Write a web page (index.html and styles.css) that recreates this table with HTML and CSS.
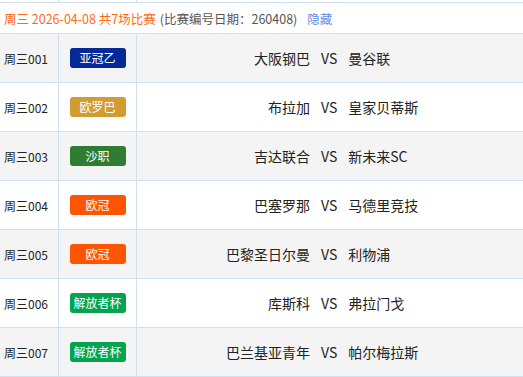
FILE: index.html
```html
<!DOCTYPE html>
<html lang="zh-CN">
<head>
<meta charset="utf-8">
<link rel="stylesheet" href="styles.css">
</head>
<body>
<div class="board">
  <div class="row stub">
    <div class="c-no"></div>
    <div class="c-lg"></div>
    <div class="c-match"></div>
  </div>
  <div class="head">
    <span class="h-date">周三 2026-04-08 共7场比赛</span>
    <span class="h-code">(比赛编号日期：260408)</span>
    <span class="h-hide">隐藏</span>
  </div>
  <div class="row alt">
    <div class="c-no">周三001</div>
    <div class="c-lg"><span class="badge b-acl2">亚冠乙</span></div>
    <div class="c-match"><span class="home">大阪钢巴</span><span class="vs">VS</span><span class="away">曼谷联</span></div>
  </div>
  <div class="row">
    <div class="c-no">周三002</div>
    <div class="c-lg"><span class="badge b-uel">欧罗巴</span></div>
    <div class="c-match"><span class="home">布拉加</span><span class="vs">VS</span><span class="away">皇家贝蒂斯</span></div>
  </div>
  <div class="row alt">
    <div class="c-no">周三003</div>
    <div class="c-lg"><span class="badge b-spl">沙职</span></div>
    <div class="c-match"><span class="home">吉达联合</span><span class="vs">VS</span><span class="away">新未来SC</span></div>
  </div>
  <div class="row">
    <div class="c-no">周三004</div>
    <div class="c-lg"><span class="badge b-ucl">欧冠</span></div>
    <div class="c-match"><span class="home">巴塞罗那</span><span class="vs">VS</span><span class="away">马德里竞技</span></div>
  </div>
  <div class="row alt">
    <div class="c-no">周三005</div>
    <div class="c-lg"><span class="badge b-ucl">欧冠</span></div>
    <div class="c-match"><span class="home">巴黎圣日尔曼</span><span class="vs">VS</span><span class="away">利物浦</span></div>
  </div>
  <div class="row">
    <div class="c-no">周三006</div>
    <div class="c-lg"><span class="badge b-lib">解放者杯</span></div>
    <div class="c-match"><span class="home">库斯科</span><span class="vs">VS</span><span class="away">弗拉门戈</span></div>
  </div>
  <div class="row alt">
    <div class="c-no">周三007</div>
    <div class="c-lg"><span class="badge b-lib">解放者杯</span></div>
    <div class="c-match"><span class="home">巴兰基亚青年</span><span class="vs">VS</span><span class="away">帕尔梅拉斯</span></div>
  </div>
</div>
</body>
</html>
```

FILE: styles.css
```css
html, body {
  margin: 0;
  padding: 0;
  background: #fff;
}
body {
  font-family: "Noto Sans CJK SC", "Noto Sans", sans-serif;
  color: #222;
  overflow: hidden;
}
.board {
  width: 523px;
  display: flex;
  flex-direction: column;
}
.row {
  display: flex;
  height: 48px;
  border-bottom: 1px solid #cfe0ef;
  background: #fff;
}
.row.alt {
  background: #f4f4f4;
}
.row.stub {
  height: 2px;
  overflow: hidden;
}
.c-no {
  width: 59px;
  flex: none;
  border-right: 1px solid #cfe0ef;
  display: flex;
  align-items: center;
  padding-left: 4px;
  box-sizing: border-box;
  font-size: 12px;
  color: #222;
}
.c-lg {
  width: 78px;
  flex: none;
  border-right: 1px solid #cfe0ef;
  display: flex;
  align-items: center;
  justify-content: center;
  box-sizing: border-box;
}
.c-match {
  flex: 1;
  display: flex;
  align-items: center;
  font-size: 14px;
  color: #222;
}
.home {
  width: 173px;
  text-align: right;
}
.vs {
  margin: 0 11px 0 11px;
}
.badge {
  width: 56px;
  height: 20px;
  border-radius: 3px;
  color: #fff;
  font-size: 12px;
  line-height: 20px;
  text-align: center;
}
.b-acl2 { background: #052a97; }
.b-uel { background: #d29c31; }
.b-spl { background: #2e7d32; }
.b-ucl { background: #ff5500; }
.b-lib { background: #05a350; }
.head {
  height: 30px;
  border-bottom: 1px solid #cfe0ef;
  display: flex;
  align-items: center;
  padding-left: 4px;
  font-size: 12.5px;
  white-space: nowrap;
}
.h-date {
  color: #ff6a12;
}
.h-code {
  color: #555;
  margin-left: 4px;
}
.h-hide {
  color: #5b8fe3;
  margin-left: 10px;
}
```
